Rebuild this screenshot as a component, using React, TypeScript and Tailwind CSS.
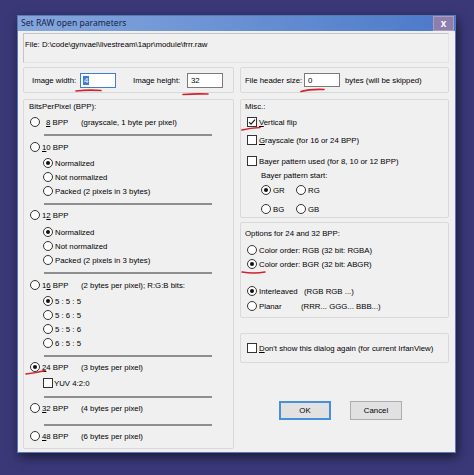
import type { ReactNode } from "react"

function Radio({ on = false }: { on?: boolean }) {
  return (
    <span className="grid h-[10px] w-[10px] shrink-0 place-items-center rounded-full border border-[#333] bg-white">
      {on ? <span className="h-[4px] w-[4px] rounded-full bg-[#111]" /> : null}
    </span>
  )
}

function Check({ on = false }: { on?: boolean }) {
  return (
    <span className="grid h-[10px] w-[10px] shrink-0 place-items-center border border-[#333] bg-white">
      {on ? (
        <svg width="8" height="8" viewBox="0 0 8 8">
          <path d="M1 4.2 L3 6.2 L7 1.6" fill="none" stroke="#111" strokeWidth="1.1" />
        </svg>
      ) : null}
    </span>
  )
}

function Row({ className = "", children }: { className?: string; children: ReactNode }) {
  return <div className={`flex h-[14px] items-center whitespace-nowrap ${className}`}>{children}</div>
}

function Sep({ className = "" }: { className?: string }) {
  return <div className={`ml-[20px] h-[2px] w-[168px] bg-[#8e8e8e] ${className}`} />
}

function Button({ label, primary = false }: { label: string; primary?: boolean }) {
  return (
    <div
      className={`grid h-[19px] w-[52px] place-items-center bg-[#e1e1e1] ${
        primary ? "border-2 border-[#4a8fdc]" : "border border-[#adadad]"
      }`}
    >
      {label}
    </div>
  )
}

export default function App() {
  return (
    <div className="relative h-[475px] w-[474px] overflow-hidden bg-[#3a3877] pl-[17px] pt-[15px] font-['Liberation_Sans',Arial,sans-serif] text-[7.8px] leading-[9px] text-black">
      <div className="flex h-[438px] w-[439px] flex-col border border-[#5b79b8] bg-[#f0f0f0] shadow-[2px_4px_10px_rgba(0,0,0,0.55)]">
        <div className="flex h-[15px] shrink-0 items-center justify-between bg-linear-to-r from-[#86a7dc] to-[#4b79c9] pl-[3px]">
          <span className="font-['Noto_Sans',sans-serif] text-[8.6px] text-[#15244a]">Set RAW open parameters</span>
          <span className="mr-[1px] grid h-[15px] w-[21px] place-items-center border border-[#a99dc3] bg-[#8c7fab] text-[10px] font-bold text-white">x</span>
        </div>

        <div className="flex-1 pl-[5px] pr-[6px] pt-[2px]">
          <div className="h-[30px] border border-[#c4c4c4] border-b-[#e4e4e4] border-r-[#e4e4e4] pl-[1px] pt-[6px]">
            File: D:\code\gynvael\livestream\1apr\module\frrr.raw
          </div>

          <div className="mt-[4px] grid grid-cols-[211px_209px] gap-[6px]">
            <div className="flex h-[26px] items-center rounded-[2px] border border-[#d9d9d9] pl-[8px]">
              <span className="w-[48px]">Image width:</span>
              <span className="flex h-[15px] w-[36px] items-center border border-[#3c7fd1] bg-white pl-[2px]">
                <span className="bg-[#3c7fd1] px-[1px] text-white">4</span>
              </span>
              <span className="ml-[17px] w-[54px]">Image height:</span>
              <span className="flex h-[15px] w-[36px] items-center border border-[#7a7a7a] bg-white pl-[3px]">32</span>
            </div>
            <div className="flex h-[26px] items-center rounded-[2px] border border-[#d9d9d9] pl-[4px]">
              <span className="w-[59px]">File header size:</span>
              <span className="flex h-[14px] w-[36px] items-center border border-[#7a7a7a] bg-white pl-[3px]">0</span>
              <span className="ml-[5px]">bytes (will be skipped)</span>
            </div>
          </div>

          <div className="mt-[6px] grid grid-cols-[211px_209px] gap-[6px]">
            <div className="h-[350px] rounded-[2px] border border-[#d9d9d9]">
              <div className="flex h-[12px] items-center pl-[5px]">BitsPerPixel (BPP):</div>
              <Row className="mt-[3px] pl-[6px]">
                <Radio />
                <span className="ml-[6px] w-[35px]"><u>8</u> BPP</span>
                <span>(grayscale, 1 byte per pixel)</span>
              </Row>
              <Sep className="mt-[5px]" />
              <Row className="mt-[4px] pl-[6px]">
                <Radio />
                <span className="ml-[2px]"><u>1</u>0 BPP</span>
              </Row>
              <Row className="mt-[2px] pl-[19px]"><Radio on /><span className="ml-[2px]">Normalized</span></Row>
              <Row className="pl-[19px]"><Radio /><span className="ml-[2px]">Not normalized</span></Row>
              <Row className="pl-[19px]"><Radio /><span className="ml-[2px]">Packed (2 pixels in 3 bytes)</span></Row>
              <Sep className="mt-[5px]" />
              <Row className="mt-[3px] pl-[6px]">
                <Radio />
                <span className="ml-[2px]">1<u>2</u> BPP</span>
              </Row>
              <Row className="mt-[3px] pl-[19px]"><Radio on /><span className="ml-[2px]">Normalized</span></Row>
              <Row className="pl-[19px]"><Radio /><span className="ml-[2px]">Not normalized</span></Row>
              <Row className="pl-[19px]"><Radio /><span className="ml-[2px]">Packed (2 pixels in 3 bytes)</span></Row>
              <Sep className="mt-[5px]" />
              <Row className="mt-[4px] pl-[6px]">
                <Radio />
                <span className="ml-[2px] w-[39px]">1<u>6</u> BPP</span>
                <span>(2 bytes per pixel); R:G:B bits:</span>
              </Row>
              <Row className="mt-[2px] pl-[19px]"><Radio on /><span className="ml-[2px]">5 : 5 : 5</span></Row>
              <Row className="pl-[19px]"><Radio /><span className="ml-[2px]">5 : 6 : 5</span></Row>
              <Row className="pl-[19px]"><Radio /><span className="ml-[2px]">5 : 5 : 6</span></Row>
              <Row className="pl-[19px]"><Radio /><span className="ml-[2px]">6 : 5 : 5</span></Row>
              <Sep className="mt-[5px]" />
              <Row className="mt-[3px] pl-[6px]">
                <Radio on />
                <span className="ml-[2px] w-[39px]"><u>2</u>4 BPP</span>
                <span>(3 bytes per pixel)</span>
              </Row>
              <Row className="mt-[2px] pl-[19px]"><Check /><span className="ml-[1px]">YUV 4:2:0</span></Row>
              <Sep className="mt-[6px]" />
              <Row className="mt-[3px] pl-[6px]">
                <Radio />
                <span className="ml-[2px] w-[39px]"><u>3</u>2 BPP</span>
                <span>(4 bytes per pixel)</span>
              </Row>
              <Sep className="mt-[9px]" />
              <Row className="mt-[3px] pl-[6px]">
                <Radio />
                <span className="ml-[2px] w-[39px]"><u>4</u>8 BPP</span>
                <span>(6 bytes per pixel)</span>
              </Row>
            </div>

            <div>
              <div className="h-[119px] rounded-[2px] border border-[#d9d9d9]">
                <div className="flex h-[12px] items-center pl-[4px]">Misc.:</div>
                <Row className="mt-[3px] pl-[6px]"><Check on /><span className="ml-[2px]"><u>V</u>ertical flip</span></Row>
                <Row className="mt-[4px] pl-[6px]"><Check /><span className="ml-[2px]"><u>G</u>rayscale (for 16 or 24 BPP)</span></Row>
                <Row className="mt-[7px] pl-[6px]"><Check /><span className="ml-[2px]">Bayer pattern used (for 8, 10 or 12 BPP)</span></Row>
                <Row className="pl-[20px]">Bayer pattern start:</Row>
                <Row className="mt-[1px] pl-[20px]">
                  <Radio on /><span className="ml-[2px] w-[23px]">GR</span>
                  <Radio /><span className="ml-[2px]">RG</span>
                </Row>
                <Row className="mt-[5px] pl-[20px]">
                  <Radio /><span className="ml-[2px] w-[23px]">BG</span>
                  <Radio /><span className="ml-[2px]">GB</span>
                </Row>
              </div>

              <div className="mt-[4px] h-[96px] rounded-[2px] border border-[#d9d9d9] pt-[4px]">
                <div className="flex h-[12px] items-center pl-[4px]">Options for 24 and 32 BPP:</div>
                <Row className="mt-[4px] pl-[6px]"><Radio /><span className="ml-[2px]">Color order: RGB (32 bit: RGBA)</span></Row>
                <Row className="pl-[6px]"><Radio on /><span className="ml-[2px]">Color order: BGR (32 bit: ABGR)</span></Row>
                <Row className="mt-[13px] pl-[6px]">
                  <Radio on /><span className="ml-[2px] w-[45px]">Interleaved</span>
                  <span>(RGB RGB ...)</span>
                </Row>
                <Row className="mt-[1px] pl-[6px]">
                  <Radio /><span className="ml-[2px] w-[42px]">Planar</span>
                  <span>(RRR... GGG... BBB...)</span>
                </Row>
              </div>

              <div className="mt-[15px] h-[30px] rounded-[2px] border border-[#d9d9d9] pt-[7px]">
                <Row className="pl-[6px]"><Check /><span className="ml-[2px]"><u>D</u>on&apos;t show this dialog again (for current IrfanView)</span></Row>
              </div>

              <div className="ml-[39px] mt-[38px] flex gap-[19px]">
                <Button label="OK" primary />
                <Button label="Cancel" />
              </div>
            </div>
          </div>
        </div>
      </div>

      <svg className="pointer-events-none absolute left-0 top-0" width="474" height="475" viewBox="0 0 474 475">
        <g fill="none" stroke="#d3232d" strokeWidth="1.6" strokeLinecap="round">
          <path d="M76 91 Q88 89.5 101 90.5" />
          <path d="M183 94.5 Q195 93.5 208 94" />
          <path d="M301 91.5 Q310 89 324 89.5" />
          <path d="M242 130 Q250 128 260 127.5" />
          <path d="M26 374 Q36 373 45 370.5" />
          <path d="M242 272 Q254 274 265 272" />
        </g>
      </svg>
    </div>
  )
}
